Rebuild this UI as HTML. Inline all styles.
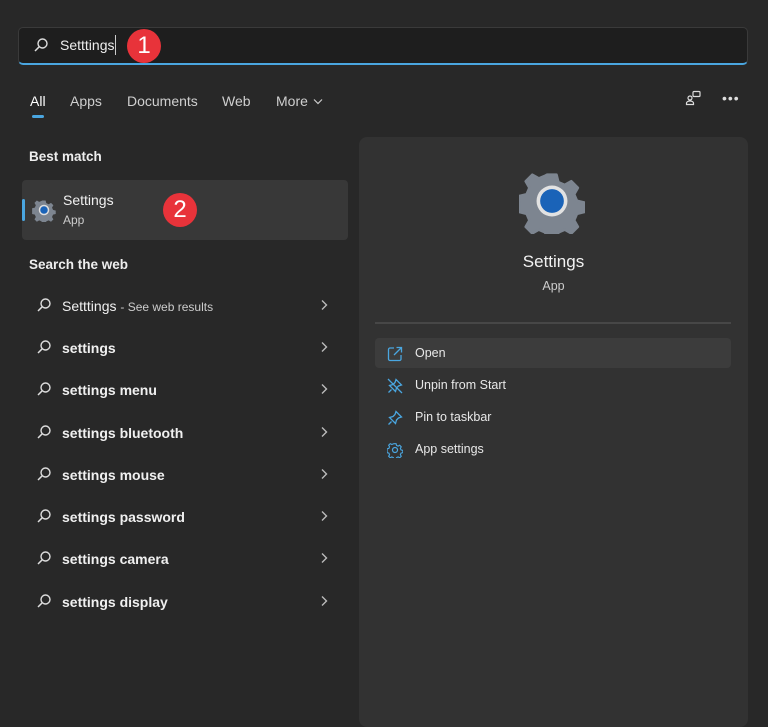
<!DOCTYPE html>
<html><head><style>
*{margin:0;padding:0;box-sizing:border-box}
body{width:768px;height:713px;background:#282828;font-family:"Liberation Sans",sans-serif;color:#fff;position:relative;overflow:hidden}
.a{position:absolute}
.search{left:18px;top:27px;width:730px;height:38px;background:#1e1e1e;border:1px solid #3a3a3a;border-bottom:2px solid #4aa6e0;border-radius:5px}
.badge{width:34px;height:34px;border-radius:50%;background:#e8333a;color:#fff;font-size:24px;text-align:center;line-height:34px}
.tab{top:93px;font-size:14px;color:#cfcfcf}
.row{left:36px;font-size:14px;font-weight:bold;color:#f0f0f0}
.row svg{position:absolute;left:0;top:-1px}
.row span{position:absolute;left:26px;top:0;white-space:nowrap}
.row svg.chev{left:284px;top:1px}
.act{left:387px;font-size:12.5px;color:#e8e8e8}
.act span{position:absolute;left:28px;white-space:nowrap}
</style></head><body>
<div class="a search"></div>
<svg class="a" style="left:33px;top:37px" width="16" height="16" viewBox="0 0 16 16"><circle cx="9.5" cy="6.5" r="4.5" fill="none" stroke="#ddd" stroke-width="1.4"/><path d="M6.3 9.7L2 14" stroke="#ddd" stroke-width="1.5"/></svg>
<div class="a" style="left:60px;top:37px;font-size:14px;color:#eee">Setttings</div>
<div class="a" style="left:115px;top:35px;width:1px;height:20px;background:#ccc"></div>
<div class="a badge" style="left:127px;top:29px">1</div>

<div class="a tab" style="left:30px;color:#fff">All</div>
<div class="a" style="left:32px;top:115px;width:12px;height:3px;border-radius:2px;background:#4aa6e0"></div>
<div class="a tab" style="left:70px">Apps</div>
<div class="a tab" style="left:127px">Documents</div>
<div class="a tab" style="left:222px">Web</div>
<div class="a tab" style="left:276px">More</div>
<svg class="a" style="left:313px;top:98px" width="10" height="7" viewBox="0 0 10 7"><path d="M1 1.5l4 4 4-4" fill="none" stroke="#ccc" stroke-width="1.2"/></svg>
<svg class="a" style="left:685px;top:90px" width="18" height="18" viewBox="0 0 18 18" fill="none" stroke="#ddd" stroke-width="1.2"><rect x="8" y="1.5" width="7" height="5" rx="1"/><circle cx="5" cy="8" r="2"/><path d="M1.5 13a3.5 2 0 0 1 7 0v1.5h-7z"/></svg>
<div class="a" style="left:722px;top:90px;font-size:14px;color:#ddd;letter-spacing:1px">•••</div>

<div class="a" style="left:29px;top:149px;font-size:13.5px;font-weight:bold;color:#eee">Best match</div>
<div class="a" style="left:22px;top:180px;width:326px;height:60px;background:#383838;border-radius:4px"></div>
<div class="a" style="left:22px;top:199px;width:3px;height:22px;background:#4aa6e0;border-radius:2px"></div>
<svg class="a" style="left:32px;top:198px" width="24" height="24" viewBox="0 0 64 64"><path fill="#7d8590" d="M27 4h10l2 8 7 3 7-4 7 7-4 7 3 7 8 2v10l-8 2-3 7 4 7-7 7-7-4-7 3-2 8H27l-2-8-7-3-7 4-7-7 4-7-3-7-8-2V27l8-2 3-7-4-7 7-7 7 4 7-3z" transform="translate(3 3) scale(.9)"/><circle cx="32" cy="32" r="14" fill="#ddd"/><circle cx="32" cy="32" r="10" fill="#1a63b8"/></svg>
<div class="a" style="left:63px;top:192px;font-size:14px;color:#f0f0f0">Settings</div>
<div class="a" style="left:63px;top:213px;font-size:12px;color:#ccc">App</div>
<div class="a badge" style="left:163px;top:193px">2</div>

<div class="a" style="left:29px;top:257px;font-size:13.5px;font-weight:bold;color:#eee">Search the web</div>

<div class="a row" style="top:298px"><svg width="16" height="16" viewBox="0 0 16 16"><circle cx="9.5" cy="6.5" r="4.5" fill="none" stroke="#ddd" stroke-width="1.4"/><path d="M6.3 9.7L2 14" stroke="#ddd" stroke-width="1.5"/></svg><span style="font-weight:normal">Setttings <small style="font-size:12px;color:#ccc">- See web results</small></span><svg class="chev" width="8" height="12" viewBox="0 0 8 12"><path d="M2 1.5l4.5 4.5-4.5 4.5" fill="none" stroke="#bbb" stroke-width="1.4"/></svg></div>
<div class="a row" style="top:340px"><svg width="16" height="16" viewBox="0 0 16 16"><circle cx="9.5" cy="6.5" r="4.5" fill="none" stroke="#ddd" stroke-width="1.4"/><path d="M6.3 9.7L2 14" stroke="#ddd" stroke-width="1.5"/></svg><span>settings</span><svg class="chev" width="8" height="12" viewBox="0 0 8 12"><path d="M2 1.5l4.5 4.5-4.5 4.5" fill="none" stroke="#bbb" stroke-width="1.4"/></svg></div>
<div class="a row" style="top:382px"><svg width="16" height="16" viewBox="0 0 16 16"><circle cx="9.5" cy="6.5" r="4.5" fill="none" stroke="#ddd" stroke-width="1.4"/><path d="M6.3 9.7L2 14" stroke="#ddd" stroke-width="1.5"/></svg><span>settings menu</span><svg class="chev" width="8" height="12" viewBox="0 0 8 12"><path d="M2 1.5l4.5 4.5-4.5 4.5" fill="none" stroke="#bbb" stroke-width="1.4"/></svg></div>
<div class="a row" style="top:425px"><svg width="16" height="16" viewBox="0 0 16 16"><circle cx="9.5" cy="6.5" r="4.5" fill="none" stroke="#ddd" stroke-width="1.4"/><path d="M6.3 9.7L2 14" stroke="#ddd" stroke-width="1.5"/></svg><span>settings bluetooth</span><svg class="chev" width="8" height="12" viewBox="0 0 8 12"><path d="M2 1.5l4.5 4.5-4.5 4.5" fill="none" stroke="#bbb" stroke-width="1.4"/></svg></div>
<div class="a row" style="top:467px"><svg width="16" height="16" viewBox="0 0 16 16"><circle cx="9.5" cy="6.5" r="4.5" fill="none" stroke="#ddd" stroke-width="1.4"/><path d="M6.3 9.7L2 14" stroke="#ddd" stroke-width="1.5"/></svg><span>settings mouse</span><svg class="chev" width="8" height="12" viewBox="0 0 8 12"><path d="M2 1.5l4.5 4.5-4.5 4.5" fill="none" stroke="#bbb" stroke-width="1.4"/></svg></div>
<div class="a row" style="top:509px"><svg width="16" height="16" viewBox="0 0 16 16"><circle cx="9.5" cy="6.5" r="4.5" fill="none" stroke="#ddd" stroke-width="1.4"/><path d="M6.3 9.7L2 14" stroke="#ddd" stroke-width="1.5"/></svg><span>settings password</span><svg class="chev" width="8" height="12" viewBox="0 0 8 12"><path d="M2 1.5l4.5 4.5-4.5 4.5" fill="none" stroke="#bbb" stroke-width="1.4"/></svg></div>
<div class="a row" style="top:551px"><svg width="16" height="16" viewBox="0 0 16 16"><circle cx="9.5" cy="6.5" r="4.5" fill="none" stroke="#ddd" stroke-width="1.4"/><path d="M6.3 9.7L2 14" stroke="#ddd" stroke-width="1.5"/></svg><span>settings camera</span><svg class="chev" width="8" height="12" viewBox="0 0 8 12"><path d="M2 1.5l4.5 4.5-4.5 4.5" fill="none" stroke="#bbb" stroke-width="1.4"/></svg></div>
<div class="a row" style="top:594px"><svg width="16" height="16" viewBox="0 0 16 16"><circle cx="9.5" cy="6.5" r="4.5" fill="none" stroke="#ddd" stroke-width="1.4"/><path d="M6.3 9.7L2 14" stroke="#ddd" stroke-width="1.5"/></svg><span>settings display</span><svg class="chev" width="8" height="12" viewBox="0 0 8 12"><path d="M2 1.5l4.5 4.5-4.5 4.5" fill="none" stroke="#bbb" stroke-width="1.4"/></svg></div>

<div class="a" style="left:359px;top:137px;width:389px;height:590px;background:#323232;border-radius:8px"></div>
<svg class="a" style="left:519px;top:168px" width="66" height="66" viewBox="0 0 64 64"><path fill="#7d8590" stroke="#7d8590" stroke-width="3" stroke-linejoin="round" d="M27 4h10l2 8 7 3 7-4 7 7-4 7 3 7 8 2v10l-8 2-3 7 4 7-7 7-7-4-7 3-2 8H27l-2-8-7-3-7 4-7-7 4-7-3-7-8-2V27l8-2 3-7-4-7 7-7 7 4 7-3z" transform="translate(3 3) scale(.9)"/><circle cx="32" cy="32" r="15" fill="#e2e2e2"/><circle cx="32" cy="32" r="11.5" fill="#1a63b8"/></svg>
<div class="a" style="left:359px;width:389px;top:252px;text-align:center;font-size:17px;color:#f2f2f2">Settings</div>
<div class="a" style="left:359px;width:389px;top:279px;text-align:center;font-size:12.5px;color:#ccc">App</div>
<div class="a" style="left:375px;top:322px;width:356px;height:2px;background:#474747"></div>
<div class="a" style="left:375px;top:338px;width:356px;height:30px;background:#3c3c3c;border-radius:4px"></div>
<div class="a act" style="top:346px"><svg width="16" height="16" viewBox="0 0 16 16" fill="none" stroke="#4aa6e0" stroke-width="1.3"><path d="M7 2H3a1.5 1.5 0 0 0-1.5 1.5v9.5A1.5 1.5 0 0 0 3 14.5h9.5A1.5 1.5 0 0 0 14 13V9"/><path d="M9.5 1.5h5v5M14.5 1.5L7 9"/></svg><span style="top:0">Open</span></div>
<div class="a act" style="top:378px"><svg width="16" height="16" viewBox="0 0 16 16" fill="none" stroke="#4aa6e0" stroke-width="1.3"><path d="M1 1l14 14M9 1.5l5.5 5.5-3 1-2 2-1 3.5L2.5 7.5 6 6.5l2-2z"/><path d="M4.5 11.5L1.5 14.5"/></svg><span style="top:0">Unpin from Start</span></div>
<div class="a act" style="top:410px"><svg width="16" height="16" viewBox="0 0 16 16" fill="none" stroke="#4aa6e0" stroke-width="1.3"><path d="M9 1.5l5.5 5.5-3 1-2 2-1 3.5L2.5 7.5 6 6.5l2-2z"/><path d="M4.5 11.5L1.5 14.5"/></svg><span style="top:0">Pin to taskbar</span></div>
<div class="a act" style="top:442px"><svg width="16" height="16" viewBox="0 0 64 64" fill="none" stroke="#4aa6e0" stroke-width="5"><path d="M27 4h10l2 8 7 3 7-4 7 7-4 7 3 7 8 2v10l-8 2-3 7 4 7-7 7-7-4-7 3-2 8H27l-2-8-7-3-7 4-7-7 4-7-3-7-8-2V27l8-2 3-7-4-7 7-7 7 4 7-3z" transform="translate(3 3) scale(.9)"/><circle cx="32" cy="32" r="10"/></svg><span style="top:0">App settings</span></div>
</body></html>
